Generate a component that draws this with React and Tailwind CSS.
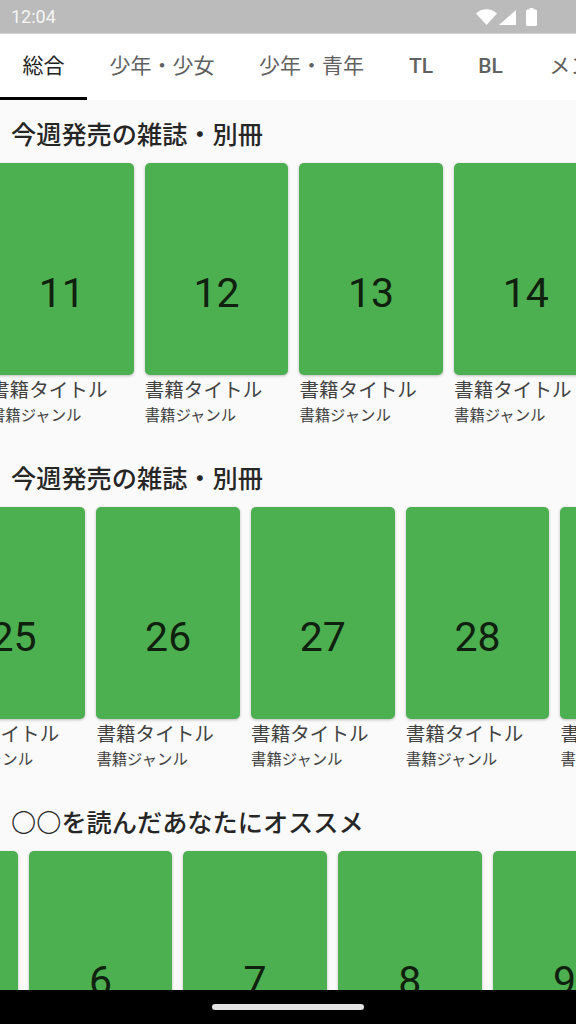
const tabs = [
  { label: '総合', active: true, width: 'w-[87px]', weight: 'font-normal' },
  { label: '少年・少女', width: 'w-[150px]', weight: 'font-normal' },
  { label: '少年・青年', width: 'w-[149px]', weight: 'font-normal' },
  { label: 'TL', width: 'w-[70px]', weight: 'font-medium' },
  { label: 'BL', width: 'w-[69px]', weight: 'font-medium' },
  { label: 'メンズ', width: 'w-[111px]', weight: 'font-normal' },
];

const sections = [
  { title: '今週発売の雑誌・別冊', numbers: [11, 12, 13, 14], offset: '-ml-[10px]' },
  { title: '今週発売の雑誌・別冊', numbers: [25, 26, 27, 28, 29], offset: '-ml-[58.300px]' },
  { prefix: '〇〇', title: 'を読んだあなたにオススメ', numbers: [5, 6, 7, 8, 9], offset: '-ml-[126px]' },
];

const BookCard = ({ number }) => (
  <div className="w-[143.500px] shrink-0">
    <div className="h-[212px] rounded-[5px] bg-[#4caf50] shadow-[0_1px_3px_rgba(0,0,0,0.25)] flex items-center justify-center pt-[49px]">
      <span className="text-[41px] leading-none font-normal text-[#10200f]">{number}</span>
    </div>
    <p className="mt-[3px] text-[19.600px] leading-[26px] text-[#424242] whitespace-nowrap">書籍タイトル</p>
    <p className="text-[15.360px] leading-[25px] text-[#424242] whitespace-nowrap">書籍ジャンル</p>
  </div>
);

const StatusBar = () => (
  <div className="h-[34px] shrink-0 bg-[#bbbbbb] border-b border-[#d4d4d4] flex items-center justify-between pl-[11px] pr-[39px]">
    <span className="text-[18px] text-[#f5f5f5]">12:04</span>
    <div className="flex items-center gap-[1px]">
      <svg width="21" height="16" viewBox="0 0 21 16" fill="#ffffff">
        <path d="M0 4.500C2.900 1.800 6.500.3 10.500.3s7.600 1.500 10.500 4.200L10.500 16z" />
      </svg>
      <svg width="18" height="16" viewBox="0 0 18 16" fill="#ffffff">
        <path d="M18 1V16H1z" />
      </svg>
      <svg width="11" height="18" viewBox="0 0 11 18" fill="#ffffff" className="ml-[9px]">
        <path d="M3.500 0h4v1.500h2a1.500 1.500 0 0 1 1.500 1.500v13.500a1.500 1.500 0 0 1-1.500 1.500h-8A1.500 1.500 0 0 1 0 16.500V3A1.500 1.500 0 0 1 1.500 1.500h2z" />
      </svg>
    </div>
  </div>
);

const App = () => {
  return (
    <div className="h-[1024px] w-[576px] overflow-hidden flex flex-col bg-[#fafafa] font-['Roboto','Noto_Sans_CJK_JP',sans-serif]">
      <StatusBar />

      <nav className="h-[66px] shrink-0 bg-white flex overflow-hidden">
        {tabs.map((tab) => (
          <div
            key={tab.label}
            className={`shrink-0 ${tab.width} ${tab.weight} h-full flex items-center justify-center pt-[2px] text-[21px] whitespace-nowrap border-b-[3px] ${
              tab.active ? 'border-black text-[#212121]' : 'border-transparent text-[#616161]'
            }`}
          >
            {tab.label}
          </div>
        ))}
      </nav>

      <main className="flex-1 overflow-hidden">
        {sections.map((section, i) => (
          <section key={i} className="h-[344px] overflow-hidden">
            <h2 className="pl-[11px] h-[63px] pt-[8px] flex items-center text-[25.200px] font-medium text-[#262626] whitespace-nowrap">
              {section.prefix && <span className="font-light">{section.prefix}</span>}
              {section.title}
            </h2>
            <div className={`flex gap-[11.200px] ${section.offset}`}>
              {section.numbers.map((number) => (
                <BookCard key={number} number={number} />
              ))}
            </div>
          </section>
        ))}
      </main>

      <div className="h-[34px] shrink-0 bg-black flex items-center justify-center">
        <div className="w-[152px] h-[6px] rounded-full bg-[#e3e3e3]"></div>
      </div>
    </div>
  );
};

export default App;
